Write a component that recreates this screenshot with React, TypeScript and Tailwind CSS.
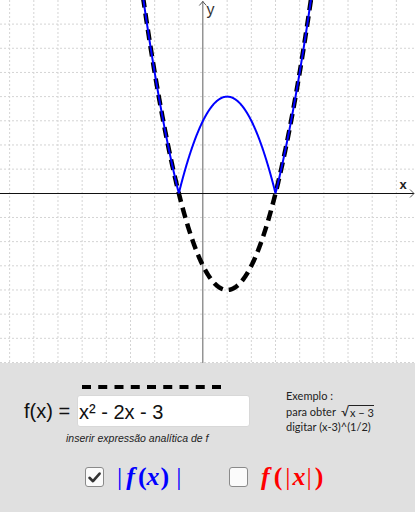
import React from "react";

const W = 415;
const H = 363;
const ox = 203;
const oy = 193.3;
const u = 24.17;
const px = (x: number) => ox + x * u;
const py = (y: number) => oy - y * u;
const f = (x: number) => x * x - 2 * x - 3;

function buildPath(g: (x: number) => number) {
  const parts: string[] = [];
  for (let i = 0; i <= 900; i++) {
    const x = -3.5 + i * 0.01;
    const y = g(x);
    parts.push(`${i === 0 ? "M" : "L"}${px(x).toFixed(2)},${py(y).toFixed(2)}`);
  }
  return parts.join(" ");
}

function Graph() {
  const vLines: number[] = [];
  for (let k = -10; k <= 10; k++) {
    if (k === 0) continue;
    const x = px(k);
    if (x > 0 && x < W) vLines.push(x);
  }
  const hLines: number[] = [];
  for (let k = -10; k <= 10; k++) {
    if (k === 0) continue;
    const y = py(k);
    if (y >= 0 && y <= H) hLines.push(y);
  }
  const dashed = buildPath(f);
  const abs = buildPath((x) => Math.abs(f(x)));
  return (
    <svg width={W} height={H} viewBox={`0 0 ${W} ${H}`} className="block">
      <rect x={0} y={0} width={W} height={H} fill="#ffffff" />
      {vLines.map((x, i) => (
        <line key={"v" + i} x1={x} y1={0} x2={x} y2={H} stroke="#d4d4d4" strokeWidth={1} strokeDasharray="2 2" />
      ))}
      {hLines.map((y, i) => (
        <line key={"h" + i} x1={0} y1={y} x2={W} y2={y} stroke="#d4d4d4" strokeWidth={1} strokeDasharray="2 2" />
      ))}
      {/* y axis */}
      <line x1={202.8} y1={1} x2={202.8} y2={H} stroke="#7a7a7a" strokeWidth={1.2} />
      <polyline points="199.3,5.5 202.8,1.5 206.3,5.5" fill="none" stroke="#555" strokeWidth={1} />
      {/* x axis */}
      <line x1={0} y1={193.5} x2={414} y2={193.5} stroke="#111" strokeWidth={1} />
      <polyline points="410,189.5 414,193.5 410,197.5" fill="none" stroke="#555" strokeWidth={1} />
      <text x={206.5} y={14.5} fontSize={16} fontFamily="'Liberation Sans', Arial, sans-serif" fill="#333">
        y
      </text>
      <text x={399.5} y={188.5} fontSize={13} fontWeight={700} fontFamily="'Liberation Sans', Arial, sans-serif" fill="#222">
        x
      </text>
      <path d={dashed} fill="none" stroke="#000" strokeWidth={4.5} strokeDasharray="10.5 6" />
      <path d={abs} fill="none" stroke="#0000ff" strokeWidth={2} strokeLinejoin="miter" />
    </svg>
  );
}

function Check({ checked }: { checked: boolean }) {
  return (
    <div className="w-[19px] h-[20px] rounded-[3px] border border-[#8a8a8a] bg-[#fbfbfb] flex items-center justify-center">
      {checked && (
        <svg width="15" height="15" viewBox="0 0 15 15">
          <path d="M2.5 7.8 L6 11.2 L12.6 3.6" fill="none" stroke="#333" strokeWidth={2.6} strokeLinecap="round" strokeLinejoin="round" />
        </svg>
      )}
    </div>
  );
}

const mathFont = { fontFamily: "'Liberation Serif', 'Times New Roman', serif" };

export default function App() {
  return (
    <div className="w-[415px] h-[512px] overflow-hidden bg-white">
      <Graph />
      <div className="h-[149px] bg-[#e0e0e0] pt-[22px]">
        <div className="h-[81px] flex">
          <div className="w-[262px] pl-[24px]">
            <svg width="139" height="4" className="block ml-[58px]">
              <line x1="0" y1="2" x2="139" y2="2" stroke="#000" strokeWidth={4} strokeDasharray="9 7.25" />
            </svg>
            <div className="mt-[6px] flex items-center h-[32px]">
              <span className="w-[53px] text-[20px] text-[#111] font-['Liberation_Sans',Arial,sans-serif] leading-[32px]">
                f(x) =
              </span>
              <div className="w-[173px] h-[32px] bg-white rounded-[3px] border border-[#d8d8d8] pl-[1px] pt-[1px] text-[20px] leading-[30px] text-[#111] font-['Liberation_Sans',Arial,sans-serif]">
                x² - 2x - 3
              </div>
            </div>
            <div className="mt-[5px] ml-[42px] text-[10.5px] leading-[12px] italic text-[#222] font-['Liberation_Sans',Arial,sans-serif] whitespace-nowrap">
              inserir expressão analítica de f
            </div>
          </div>
          <div className="ml-[24px] pt-[3px] text-[11px] leading-[15.5px] text-[#222] font-['Lato',sans-serif] whitespace-nowrap">
            <div>Exemplo :</div>
            <div className="flex items-end">
              <span>para obter</span>
              <span className="ml-[5px] text-[13px] leading-[15px]">√</span>
              <span className="border-t border-[#222] leading-[13px] pl-[1px]">x − 3</span>
            </div>
            <div>digitar (x-3)^(1/2)</div>
          </div>
        </div>
        <div className="flex items-center h-[22px]">
          <div className="ml-[85px]">
            <Check checked={true} />
          </div>
          <div className="ml-[13px] w-[65px] text-[26px] leading-[28px] text-[#0000ff] flex items-center" style={mathFont}>
            <span>|</span>
            <span className="italic font-bold ml-[4px]">f</span>
            <span className="font-bold ml-[3px]">(</span>
            <span className="italic font-bold">x</span>
            <span className="font-bold ml-[1px]">)</span>
            <span className="ml-[7px]">|</span>
          </div>
          <div className="ml-[47px]">
            <Check checked={false} />
          </div>
          <div className="ml-[13px] text-[26px] leading-[28px] text-[#ff0000] flex items-center" style={mathFont}>
            <span className="italic font-bold">f</span>
            <span className="font-bold ml-[4px]">(</span>
            <span className="ml-[3px]">|</span>
            <span className="italic font-bold ml-[2px]">x</span>
            <span className="ml-[1px]">|</span>
            <span className="font-bold ml-[3px]">)</span>
          </div>
        </div>
      </div>
    </div>
  );
}
